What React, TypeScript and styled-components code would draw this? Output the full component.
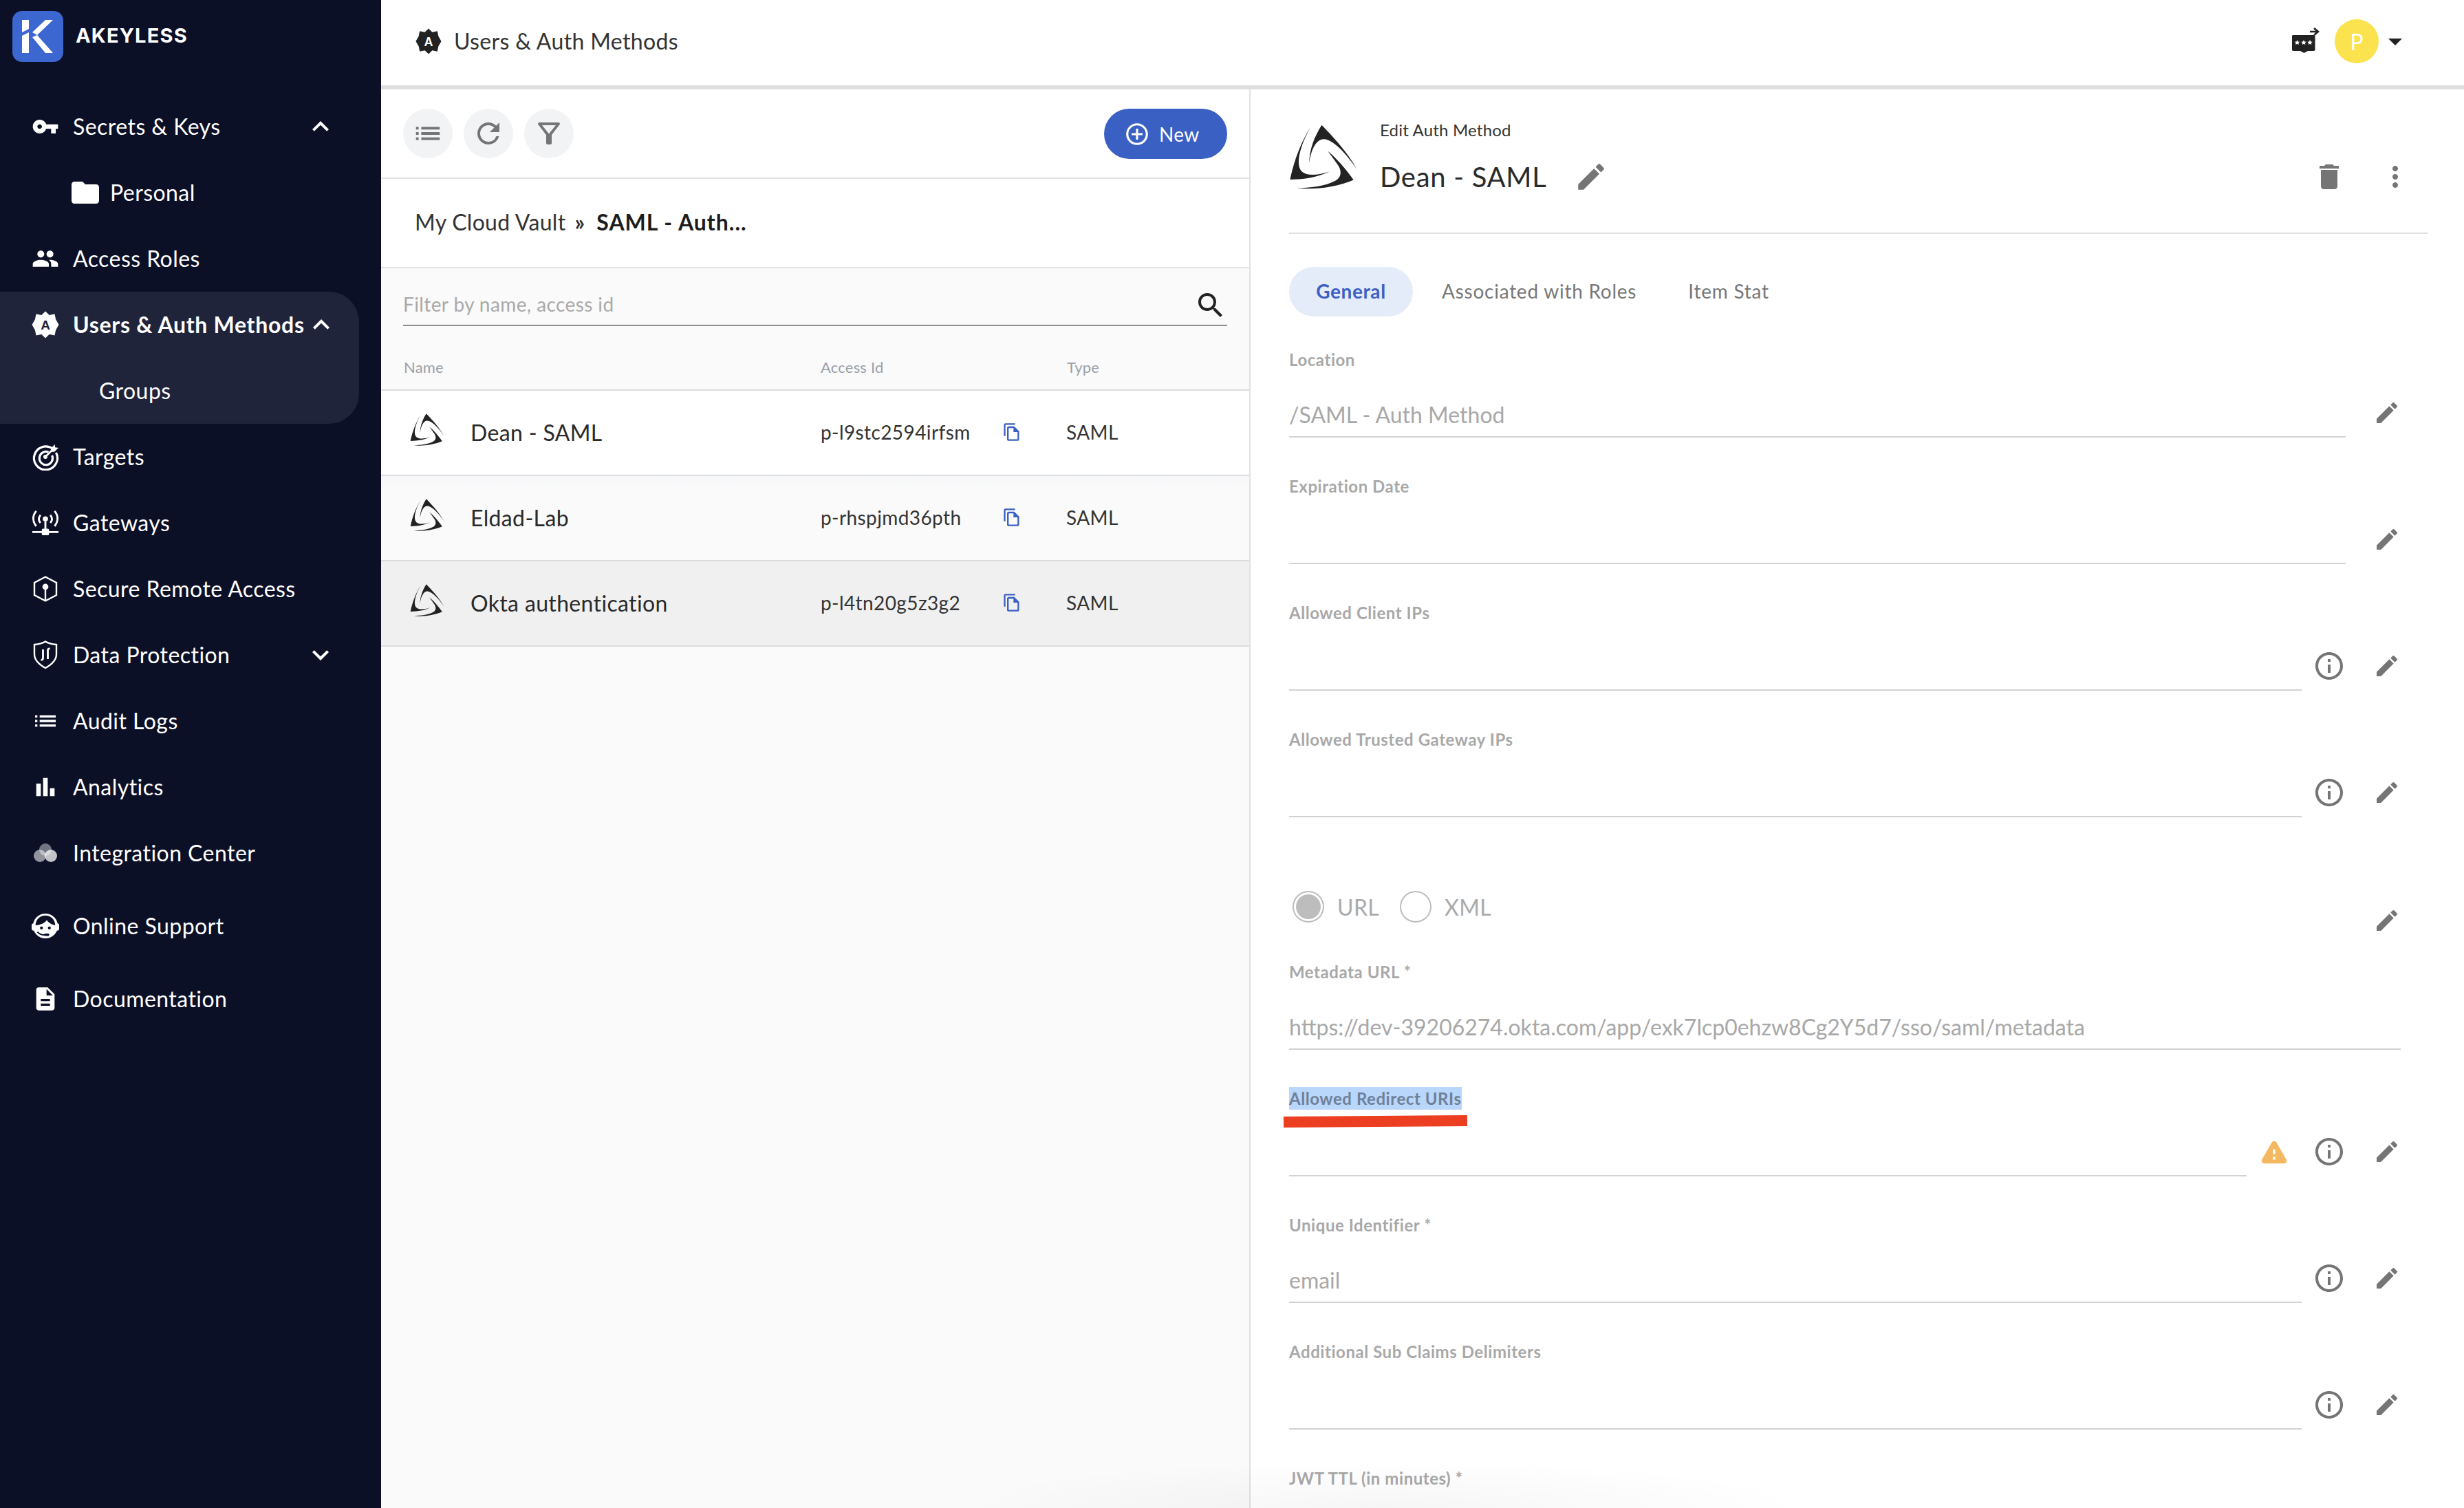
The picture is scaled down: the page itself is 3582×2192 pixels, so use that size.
import React from "react";
import styled, { createGlobalStyle } from "styled-components";
import {
  MdVpnKey, MdFolder, MdPeople, MdKeyboardArrowUp, MdKeyboardArrowDown, MdList, MdBarChart, MdDescription,
  MdRefresh, MdOutlineFilterAlt, MdAddCircleOutline, MdSearch, MdOutlineFileCopy, MdEdit, MdInfoOutline, MdDelete, MdMoreVert, MdArrowDropDown,
} from "react-icons/md";

const FONT = `"Lato", "Noto Sans", sans-serif`;

const Global = createGlobalStyle`
  html, body { margin: 0; padding: 0; background: #fff; }
  #root { width: 3582px; height: 2192px; }
  * { box-sizing: border-box; }
`;

const Root = styled.div`
  position: relative; width: 3582px; height: 2192px; overflow: hidden; display: flex;
  font-family: ${FONT}; color: #2a2a2a; background: #fff;
`;

/* ---------- sidebar ---------- */
const Sidebar = styled.aside`
  width: 554px; flex: none; height: 100%; background: #0c1027; color: #fff; display: flex; flex-direction: column;
`;
const Brand = styled.div`
  height: 136px; padding: 16px 0 0 18px; display: flex; align-items: flex-start; gap: 18px;
`;
const BrandName = styled.span`
  font-family: "Inter", sans-serif; font-weight: 700; font-size: 29px; line-height: 72px; letter-spacing: 1.2px;
`;
const NavGroup = styled.div`
  width: 522px; background: #20243a; border-radius: 0 44px 44px 0;
`;
const NavRow = styled.div<{ $spaced?: boolean }>`
  width: 490px; height: 96px; padding-left: 46px; display: flex; align-items: center; flex: none;
  margin-top: ${(p) => (p.$spaced ? 10 : 0)}px;
`;
const NavIcon = styled.span`
  width: 40px; height: 40px; flex: none; display: flex; align-items: center; justify-content: center; margin-right: 20px;
  svg { display: block; }
`;
const NavText = styled.span<{ $bold?: boolean; $indent?: number }>`
  font-size: 32px; line-height: 40px; white-space: nowrap;
  letter-spacing: ${(p) => (p.$bold ? 0.7 : 0.45)}px;
  font-weight: ${(p) => (p.$bold ? 700 : 400)};
  padding-left: ${(p) => p.$indent ?? 0}px;
`;
const Chevron = styled.span`
  margin-left: auto; display: flex; flex: none;
`;
const FolderIcon = styled.span`
  display: flex; margin-left: 54px; margin-right: 12px; width: 48px; flex: none;
`;

/* ---------- main ---------- */
const Main = styled.div`
  flex: 1; min-width: 0; display: flex; flex-direction: column;
`;
const TopBar = styled.header`
  height: 130px; flex: none; border-bottom: 6px solid #dfdfdf; padding: 0 90px 4px 50px; display: flex; align-items: center; background: #fff;
`;
const TopTitle = styled.span`
  font-size: 32px; line-height: 40px; margin-left: 18px; color: #333; letter-spacing: .35px;
`;
const TopRight = styled.div`
  margin-left: auto; display: flex; align-items: center;
`;
const Avatar = styled.span`
  width: 64px; height: 64px; border-radius: 50%; background: #fbe24f; color: #fff; display: flex; align-items: center; justify-content: center;
  font-size: 32px; margin-left: 22px;
`;
const Caret = styled.span`
  display: flex; margin-left: 0; margin-right: -14px; color: #222;
`;
const Content = styled.div`
  flex: 1; min-height: 0; display: flex;
`;

/* ---------- list pane ---------- */
const ListPane = styled.section`
  width: 1264px; flex: none; border-right: 2px solid #e2e2e2; background: #fafafa; display: flex; flex-direction: column;
`;
const Toolbar = styled.div`
  height: 130px; flex: none; background: #fff; border-bottom: 2px solid #e2e2e2; padding: 28px 32px 0; display: flex; align-items: flex-start; gap: 16px;
`;
const RoundButton = styled.span`
  width: 72px; height: 72px; border-radius: 50%; background: #f2f3f5; color: #757575; display: flex; align-items: center; justify-content: center;
`;
const NewButton = styled.span`
  margin-left: auto; width: 179px; height: 73px; border-radius: 37px; background: #3b60c4; color: #fff; display: flex; align-items: center;
  padding-left: 29px; gap: 13px; font-size: 28px; letter-spacing: .3px;
`;
const Crumbs = styled.div`
  height: 130px; flex: none; background: #fff; border-bottom: 2px solid #e2e2e2; padding: 0 0 4px 49px; display: flex; align-items: center; font-size: 32px; letter-spacing: .3px; color: #333;
`;
const CrumbSep = styled.span`
  margin: 0 17px 0 13px; font-weight: 700;
`;
const CrumbNow = styled.b`
  font-weight: 700; color: #1c1c1c; letter-spacing: 1px;
`;
const SearchBar = styled.div`
  margin: 30px 32px 0; height: 54px; border-bottom: 2px solid #8f8f8f; display: flex; align-items: center; justify-content: space-between; flex: none;
  font-size: 28px; color: #a9a9a9; letter-spacing: .4px; padding-bottom: 8px;
`;
const SearchIcon = styled.span`
  display: flex; color: #222; margin: 4px 0 0;
`;
const TableHead = styled.div`
  height: 94px; flex: none; border-bottom: 2px solid #dcdcdc; display: grid; grid-template-columns: 606px 358px 1fr; padding: 26px 0 0 33px; align-items: center;
  font-size: 22px; color: #9aa0a8; letter-spacing: .2px;
`;
const Row = styled.div<{ $bg: string }>`
  height: 124px; flex: none; border-bottom: 2px solid #dcdcdc; display: grid; grid-template-columns: 607px 259px 98px 1fr; padding: 0 0 2px 32px; align-items: center;
  background: ${(p) => p.$bg};
`;
const NameCell = styled.div`
  display: flex; align-items: center; padding-left: 10px; gap: 38px; font-size: 32px; color: #2a2a2a; letter-spacing: .35px;
  svg { margin-top: -8px; }
`;
const MonoCell = styled.div`
  font-size: 28px; color: #333; letter-spacing: .4px;
`;
const CopyCell = styled.div`
  display: flex; color: #3b60c4; margin-left: 5px;
`;

/* ---------- detail pane ---------- */
const DetailPane = styled.section`
  flex: 1; min-width: 0; padding: 0 52px 0 56px; background: #fff; overflow: hidden;
`;
const DetailHead = styled.div`
  height: 210px; border-bottom: 2px solid #e0e0e0; padding-top: 44px; display: flex; align-items: flex-start;
`;
const LogoBox = styled.span`
  display: flex; margin: 7px 32px 0 0; flex: none;
`;
const HeadText = styled.div`
  display: flex; flex-direction: column;
`;
const HeadSmall = styled.span`
  font-size: 24px; line-height: 30px; color: #333; letter-spacing: .2px;
`;
const HeadTitleRow = styled.div`
  margin-top: 28px; display: flex; align-items: center; gap: 40px; font-size: 40px; line-height: 50px; color: #2a2a2a; letter-spacing: .7px;
`;
const HeadIcon = styled.span`
  display: flex; color: #757575;
`;
const HeadActions = styled.div`
  margin-left: auto; margin-top: 59px; margin-right: 24px; display: flex; gap: 48px; color: #757575;
`;
const Tabs = styled.div`
  margin-top: 48px; display: flex; align-items: center; gap: 9px; height: 72px;
`;
const Tab = styled.span<{ $active?: boolean }>`
  height: 72px; border-radius: 36px; display: flex; align-items: center; justify-content: center; font-size: 28px; padding: 0 33px 3px;
  letter-spacing: ${(p) => (p.$active ? 0.6 : 0.75)}px;
  width: ${(p) => (p.$active ? "180px" : "auto")};
  color: ${(p) => (p.$active ? "#3b60c4" : "#777")};
  background: ${(p) => (p.$active ? "#e4ebf9" : "transparent")};
  font-weight: ${(p) => (p.$active ? 700 : 400)};
`;
const Form = styled.div`
  margin-top: 48px;
`;
const Field = styled.div`
  position: relative; height: 184px;
`;
const Label = styled.div`
  height: 30px; line-height: 30px; font-size: 24px; font-weight: 700; letter-spacing: .55px; white-space: nowrap;
  color: #a8a8a8;
`;
const SelectedText = styled.span`
  display: block; width: fit-content; transform: translateY(-2px); background: #b9d6fb; color: #6f8098; height: 33px; line-height: 33px;
`;
const InputRow = styled.div<{ $inset?: number }>`
  height: 98px; display: flex; align-items: flex-end; padding-right: ${(p) => p.$inset ?? 0}px;
`;
const Track = styled.div`
  flex: 1; height: 60px; border-bottom: 2px solid #d2d2d2; font-size: 32px; line-height: 54px; color: #a8a8a8; white-space: nowrap; letter-spacing: 0;
`;
const Slot = styled.span<{ $w: number; $pl?: number }>`
  width: ${(p) => p.$w}px; height: 72px; flex: none; display: flex; align-items: center; justify-content: center; color: #757575;
  padding-left: ${(p) => p.$pl ?? 0}px;
`;
const RedMark = styled.div`
  position: absolute; left: -8px; top: 40px; width: 267px; height: 16px; background: #ec3f22; transform: rotate(-0.4deg);
`;
const RadioBlock = styled.div`
  height: 154px; display: flex; align-items: flex-start; justify-content: space-between;
`;
const Radios = styled.div`
  display: flex; align-items: center; margin: 51px 0 0 5px;
`;
const Radio = styled.span<{ $on?: boolean }>`
  width: 46px; height: 46px; border-radius: 50%; border: 2px solid #bdbdbd; display: flex; align-items: center; justify-content: center; flex: none;
  &::after { content: ""; width: 36px; height: 36px; border-radius: 50%; background: ${(p) => (p.$on ? "#bdbdbd" : "transparent")}; }
`;
const RadioText = styled.span`
  font-size: 32px; color: #aaa; margin: 0 30px 0 19px; letter-spacing: .35px;
`;
const RadioPencil = styled.span`
  width: 120px; margin-top: 74px; display: flex; justify-content: center; color: #757575;
`;
const BottomGlow = styled.div`
  position: absolute; left: 1380px; bottom: 0; width: 1260px; height: 70px; pointer-events: none;
  background: radial-gradient(ellipse 50% 100% at 50% 100%, rgba(0, 0, 0, .035), rgba(0, 0, 0, 0));
`;

/* ---------- drawn icons ---------- */
const Badge = ({ bg, fg, size = 40 }: { bg: string; fg: string; size?: number }) => (
  <svg width={size} height={size} viewBox="0 0 40 40">
    <path d="M20 .5l5.700 5.600 7.800-1.600 1.600 7.800 4.400 7.700-4.400 7.700-1.600 7.800-7.800-1.600L20 39.500l-5.700-5.600-7.800 1.600-1.600-7.800L.5 20l4.400-7.700 1.600-7.800 7.800 1.600z" fill={bg} />
    <text x="20" y="27" textAnchor="middle" fontFamily="Liberation Sans, sans-serif" fontWeight="700" fontSize="19" fill={fg}>A</text>
  </svg>
);

const LogoMark = () => (
  <svg width="74" height="74" viewBox="0 0 74 74">
    <rect width="74" height="74" rx="14" fill="#3d67d0" />
    <path fill="#fff" d="M14 13h10v13l-10 5zM14 36l10-5v30H14zM29 31L48 13h11L36 35zM29 38l7-3 23 26H48z" />
  </svg>
);

const Tri = ({ w, h }: { w: number; h: number }) => (
  <svg width={w} height={h} viewBox="40 30 302 288">
    <g fill="#222">
      <path d="M183 32C240 90 310 170 340 230 300 170 240 100 195 95 160 92 135 140 127 205 128 140 150 85 183 32Z" />
      <path d="M133 42C90 110 60 190 42 275 110 275 170 262 218 240 170 255 120 262 95 240 75 220 78 180 90 140 100 105 115 75 133 42Z" />
      <path d="M210 148C255 185 295 235 325 277 250 310 150 322 70 313 130 313 200 305 245 280 275 262 270 230 255 210 240 190 225 168 210 148Z" />
    </g>
  </svg>
);

const Target = () => (
  <svg width="40" height="40" viewBox="0 0 40 40" fill="none" stroke="#fff" strokeWidth="3.200">
    <path d="M30.500 8.200A17 17 0 1 0 35.500 14" />
    <path d="M24.500 13.200A9.600 9.600 0 1 0 29.600 18" />
    <path d="M20 20L31 9" strokeWidth="2.600" />
    <circle cx="20" cy="20" r="3" fill="#fff" stroke="none" />
    <path d="M28 8l5.500-6 .8 4.200L39 7l-6 5.700h-5z" fill="#fff" stroke="none" />
  </svg>
);

const Gateway = () => (
  <svg width="42" height="40" viewBox="0 0 42 40" fill="none" stroke="#fff" strokeWidth="3">
    <path d="M7 2C1 9 1 18 7 25M35 2c6 7 6 16 0 23M13.500 8c-3.200 4-3.200 8.500 0 12M28.500 8c3.200 4 3.200 8.500 0 12" />
    <circle cx="21" cy="14" r="4" fill="#fff" stroke="none" />
    <path d="M21 18v14" />
    <path d="M1 34h40" />
    <rect x="15.500" y="29" width="11" height="10" rx="2" fill="#fff" stroke="none" />
  </svg>
);

const Hex = () => (
  <svg width="36" height="38" viewBox="0 0 36 38" fill="none" stroke="#fff" strokeWidth="2.400">
    <path d="M18 1.500L34 10v18l-16 8.500L2 28V10z" />
    <circle cx="18" cy="16" r="4.400" fill="#fff" stroke="none" />
    <path d="M18 18v18" />
  </svg>
);

const Shield = () => (
  <svg width="36" height="42" viewBox="0 0 36 42" fill="none" stroke="#fff" strokeWidth="2.400">
    <path d="M18 1.500c5 3 11 4 16 4.500v14c0 9-7 15-16 20C9 35 2 29 2 20V6c5-.5 11-1.500 16-4.500z" />
    <path d="M14.500 13v13c0 1.500-1.500 2.500-3 2M21.500 27V14c0-1.500 1.500-2.500 3-2" strokeWidth="2.800" />
  </svg>
);

const Circles = () => (
  <svg width="34" height="28" viewBox="0 0 34 28">
    <circle cx="17" cy="9" r="9" fill="#fff" fillOpacity=".42" />
    <circle cx="9" cy="18" r="9" fill="#fff" fillOpacity=".55" />
    <circle cx="25" cy="18" r="9" fill="#fff" fillOpacity=".75" />
  </svg>
);

const Support = () => (
  <svg width="42" height="42" viewBox="0 0 42 42">
    <circle cx="21" cy="21" r="19" fill="#fff" />
    <rect x="0" y="17" width="6" height="11" rx="3" fill="#fff" />
    <rect x="36" y="17" width="6" height="11" rx="3" fill="#fff" />
    <path fill="#0c1027" d="M6 20C6 11 13 5 21 5s15 6 15 15c-5-1-10-4-13-8-3 5-10 7-17 8z" />
    <circle cx="15" cy="24" r="2.300" fill="#0c1027" />
    <circle cx="27" cy="24" r="2.300" fill="#0c1027" />
    <path d="M9 30c3 4 8 5 13 4.500" fill="none" stroke="#0c1027" strokeWidth="2" />
    <rect x="19" y="32.500" width="8" height="3.600" rx="1.800" fill="#0c1027" />
  </svg>
);

const KeyShare = () => (
  <svg width="40" height="40" viewBox="0 0 40 40">
    <path fill="#222" d="M2 11h30a1.500 1.500 0 0 1 1.500 1.500v20a2 2 0 0 1-1.500 1.500H23l-5.500 3-5.500-3H2a2 2 0 0 1-2-1.500v-20A1.500 1.500 0 0 1 2 11z" />
    <path fill="#fff" d="M7.500 18l1.100 2.500 2.700.2-2 1.800.6 2.600-2.400-1.400-2.400 1.400.6-2.600-2-1.800 2.700-.2zM17 18l1.100 2.500 2.700.2-2 1.800.6 2.600L17 23.700l-2.400 1.400.6-2.600-2-1.800 2.700-.2zM26 18l1.100 2.500 2.700.2-2 1.800.6 2.600-2.400-1.400-2.400 1.400.6-2.600-2-1.800 2.700-.2z" />
    <path fill="none" stroke="#222" strokeWidth="2.600" d="M26 6h11M32 .9L38 6l-6 5" />
  </svg>
);

const Warn = () => (
  <svg width="46" height="46" viewBox="0 0 24 24">
    <path fill="#f4b860" d="M4.470 21h15.060c1.540 0 2.500-1.670 1.730-3L13.730 4.990c-.77-1.330-2.690-1.330-3.460 0L2.740 18c-.77 1.330.19 3 1.730 3zM12 14c-.55 0-1-.45-1-1v-2c0-.55.45-1 1-1s1 .45 1 1v2c0 .55-.45 1-1 1zm1 4h-2v-2h2v2z" />
  </svg>
);

/* ---------- data ---------- */
const rows = [
  { name: "Dean - SAML", id: "p-l9stc2594irfsm", bg: "#fff" },
  { name: "Eldad-Lab", id: "p-rhspjmd36pth", bg: "linear-gradient(#f6f7f9, #fafafa 22px)" },
  { name: "Okta authentication", id: "p-l4tn20g5z3g2", bg: "#f0f0f0" },
];

const PencilSlot = () => <Slot $w={120}><MdEdit size={40} /></Slot>;
const InfoSlot = () => <Slot $w={64} $pl={15}><MdInfoOutline size={48} /></Slot>;

export default function App() {
  return (
    <Root>
      <Global />
      <Sidebar>
        <Brand>
          <LogoMark />
          <BrandName>AKEYLESS</BrandName>
        </Brand>
        <NavRow>
          <NavIcon><MdVpnKey size={40} /></NavIcon>
          <NavText>Secrets &amp; Keys</NavText>
          <Chevron><MdKeyboardArrowUp size={48} /></Chevron>
        </NavRow>
        <NavRow>
          <FolderIcon><MdFolder size={48} /></FolderIcon>
          <NavText>Personal</NavText>
        </NavRow>
        <NavRow>
          <NavIcon><MdPeople size={40} /></NavIcon>
          <NavText>Access Roles</NavText>
        </NavRow>
        <NavGroup>
          <NavRow>
            <NavIcon><Badge bg="#fff" fg="#20243a" /></NavIcon>
            <NavText $bold>Users &amp; Auth Methods</NavText>
            <Chevron><MdKeyboardArrowUp size={48} /></Chevron>
          </NavRow>
          <NavRow>
            <NavText $indent={98}>Groups</NavText>
          </NavRow>
        </NavGroup>
        <NavRow><NavIcon><Target /></NavIcon><NavText>Targets</NavText></NavRow>
        <NavRow><NavIcon><Gateway /></NavIcon><NavText>Gateways</NavText></NavRow>
        <NavRow><NavIcon><Hex /></NavIcon><NavText>Secure Remote Access</NavText></NavRow>
        <NavRow>
          <NavIcon><Shield /></NavIcon>
          <NavText>Data Protection</NavText>
          <Chevron><MdKeyboardArrowDown size={48} /></Chevron>
        </NavRow>
        <NavRow><NavIcon><MdList size={40} /></NavIcon><NavText>Audit Logs</NavText></NavRow>
        <NavRow><NavIcon><MdBarChart size={40} /></NavIcon><NavText>Analytics</NavText></NavRow>
        <NavRow><NavIcon><Circles /></NavIcon><NavText>Integration Center</NavText></NavRow>
        <NavRow $spaced><NavIcon><Support /></NavIcon><NavText>Online Support</NavText></NavRow>
        <NavRow $spaced><NavIcon><MdDescription size={40} /></NavIcon><NavText>Documentation</NavText></NavRow>
      </Sidebar>

      <Main>
        <TopBar>
          <Badge bg="#222" fg="#fff" size={38} />
          <TopTitle>Users &amp; Auth Methods</TopTitle>
          <TopRight>
            <KeyShare />
            <Avatar>P</Avatar>
            <Caret><MdArrowDropDown size={48} /></Caret>
          </TopRight>
        </TopBar>
        <Content>
          <ListPane>
            <Toolbar>
              <RoundButton><MdList size={46} /></RoundButton>
              <RoundButton><MdRefresh size={48} /></RoundButton>
              <RoundButton><MdOutlineFilterAlt size={48} /></RoundButton>
              <NewButton><MdAddCircleOutline size={38} />New</NewButton>
            </Toolbar>
            <Crumbs>
              My Cloud Vault<CrumbSep>»</CrumbSep><CrumbNow>SAML - Auth...</CrumbNow>
            </Crumbs>
            <SearchBar>
              Filter by name, access id
              <SearchIcon><MdSearch size={48} /></SearchIcon>
            </SearchBar>
            <TableHead>
              <span>Name</span><span>Access Id</span><span>Type</span>
            </TableHead>
            {rows.map((r) => (
              <Row key={r.name} $bg={r.bg}>
                <NameCell><Tri w={50} h={47} />{r.name}</NameCell>
                <MonoCell>{r.id}</MonoCell>
                <CopyCell><MdOutlineFileCopy size={28} /></CopyCell>
                <MonoCell>SAML</MonoCell>
              </Row>
            ))}
          </ListPane>

          <DetailPane>
            <DetailHead>
              <LogoBox><Tri w={100} h={94} /></LogoBox>
              <HeadText>
                <HeadSmall>Edit Auth Method</HeadSmall>
                <HeadTitleRow>
                  Dean - SAML
                  <HeadIcon><MdEdit size={50} /></HeadIcon>
                </HeadTitleRow>
              </HeadText>
              <HeadActions>
                <MdDelete size={48} />
                <MdMoreVert size={48} />
              </HeadActions>
            </DetailHead>
            <Tabs>
              <Tab $active>General</Tab>
              <Tab>Associated with Roles</Tab>
              <Tab>Item Stat</Tab>
            </Tabs>
            <Form>
              <Field>
                <Label>Location</Label>
                <InputRow><Track>/SAML - Auth Method</Track><PencilSlot /></InputRow>
              </Field>
              <Field>
                <Label>Expiration Date</Label>
                <InputRow><Track /><PencilSlot /></InputRow>
              </Field>
              <Field>
                <Label>Allowed Client IPs</Label>
                <InputRow><Track /><InfoSlot /><PencilSlot /></InputRow>
              </Field>
              <Field>
                <Label>Allowed Trusted Gateway IPs</Label>
                <InputRow><Track /><InfoSlot /><PencilSlot /></InputRow>
              </Field>
              <RadioBlock>
                <Radios>
                  <Radio $on /><RadioText>URL</RadioText>
                  <Radio /><RadioText>XML</RadioText>
                </Radios>
                <RadioPencil><MdEdit size={40} /></RadioPencil>
              </RadioBlock>
              <Field>
                <Label>Metadata URL *</Label>
                <InputRow $inset={40}><Track>https://dev-39206274.okta.com/app/exk7lcp0ehzw8Cg2Y5d7/sso/saml/metadata</Track></InputRow>
              </Field>
              <Field>
                <Label><SelectedText>Allowed Redirect URIs</SelectedText></Label>
                <RedMark />
                <InputRow>
                  <Track />
                  <Slot $w={80}><Warn /></Slot>
                  <InfoSlot />
                  <PencilSlot />
                </InputRow>
              </Field>
              <Field>
                <Label>Unique Identifier *</Label>
                <InputRow><Track>email</Track><InfoSlot /><PencilSlot /></InputRow>
              </Field>
              <Field>
                <Label>Additional Sub Claims Delimiters</Label>
                <InputRow><Track /><InfoSlot /><PencilSlot /></InputRow>
              </Field>
              <Field>
                <Label>JWT TTL (in minutes) *</Label>
              </Field>
            </Form>
          </DetailPane>
        </Content>
      </Main>
      <BottomGlow />
    </Root>
  );
}
